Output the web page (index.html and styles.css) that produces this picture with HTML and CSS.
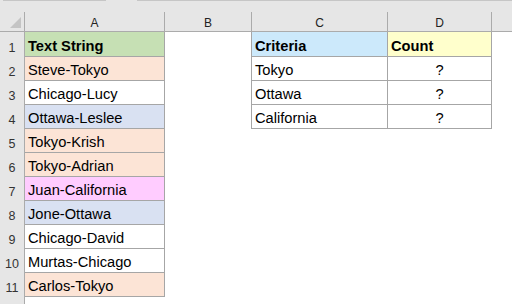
FILE: index.html
```html
<!DOCTYPE html>
<html lang="en">
<head>
<meta charset="utf-8">
<title>Count by criteria</title>
<link rel="stylesheet" href="styles.css">
</head>
<body>
<div class="topbar">
  <div class="box box-name"></div>
  <div class="box box-fx"></div>
  <div class="box box-formula"></div>
</div>
<div class="sheet">
  <!-- column headers -->
  <div class="hd corner"><span class="tri"></span></div>
  <div class="hd col">A</div>
  <div class="hd col">B</div>
  <div class="hd col">C</div>
  <div class="hd col">D</div>
  <div class="hd fill"></div>

  <!-- row 1 -->
  <div class="rn first">1</div>
  <div class="c a bold green first">Text String</div>
  <div class="c b edge first"></div>
  <div class="c t bold sky first">Criteria</div>
  <div class="c t bold lemon first">Count</div>
  <div class="c first"></div>

  <!-- row 2 -->
  <div class="rn">2</div>
  <div class="c a peach">Steve-Tokyo</div>
  <div class="c b edge"></div>
  <div class="c t">Tokyo</div>
  <div class="c t mid">?</div>
  <div class="c"></div>

  <!-- row 3 -->
  <div class="rn">3</div>
  <div class="c a">Chicago-Lucy</div>
  <div class="c b edge"></div>
  <div class="c t">Ottawa</div>
  <div class="c t mid">?</div>
  <div class="c"></div>

  <!-- row 4 -->
  <div class="rn">4</div>
  <div class="c a lilac">Ottawa-Leslee</div>
  <div class="c b edge"></div>
  <div class="c t">California</div>
  <div class="c t mid">?</div>
  <div class="c"></div>

  <div class="rn">5</div>
  <div class="c a peach">Tokyo-Krish</div>
  <div class="c span"></div>

  <div class="rn">6</div>
  <div class="c a peach">Tokyo-Adrian</div>
  <div class="c span"></div>

  <div class="rn">7</div>
  <div class="c a pink">Juan-California</div>
  <div class="c span"></div>

  <div class="rn">8</div>
  <div class="c a lilac">Jone-Ottawa</div>
  <div class="c span"></div>

  <div class="rn">9</div>
  <div class="c a">Chicago-David</div>
  <div class="c span"></div>

  <div class="rn">10</div>
  <div class="c a">Murtas-Chicago</div>
  <div class="c span"></div>

  <div class="rn">11</div>
  <div class="c a peach">Carlos-Tokyo</div>
  <div class="c span"></div>

  <div class="rn last"></div>
  <div class="c spanall"></div>
</div>
</body>
</html>
```

FILE: styles.css
```css
html, body {
  margin: 0;
  padding: 0;
  background: #ffffff;
}

body {
  width: 512px;
  height: 304px;
  overflow: hidden;
  font-family: "Liberation Sans", Arial, sans-serif;
  color: #000;
}

/* formula bar strip above the grid */
.topbar {
  position: relative;
  height: 12px;
  background: #e6e6e6;
  display: flex;
  align-items: flex-start;
}

.box {
  height: 1px;
  margin-top: -1px;
  background: #ffffff;
  border: 1px solid #c6c6c6;
  border-top: none;
}

.box-name { margin-left: 3px; width: 101px; }
.box-fx { margin-left: 31px; width: 112px; }
.box-formula { margin-left: 0; flex: 1; border-right: none; }

/* grid */
.sheet {
  display: grid;
  grid-template-columns: 25px 140px 87px 136px 104px 1fr;
  grid-template-rows: 20px 25px repeat(10, 24px) 1fr;
  height: 292px;
}

.hd {
  background: #e6e6e6;
  border-bottom: 1px solid #ababab;
  box-sizing: border-box;
  font-size: 12px;
  color: #222;
  display: flex;
  align-items: center;
  justify-content: center;
  padding-top: 2px;
}

.hd.col,
.hd.corner {
  border-right: 1px solid #ababab;
}

.corner {
  position: relative;
}

.tri {
  position: absolute;
  right: 3px;
  bottom: 3px;
  width: 0;
  height: 0;
  border-left: 11px solid transparent;
  border-bottom: 11px solid #c4c4c4;
}

.rn {
  background: #e6e6e6;
  border-right: 1px solid #ababab;
  box-sizing: border-box;
  font-size: 12.5px;
  color: #333;
  display: flex;
  align-items: flex-end;
  justify-content: center;
  padding-bottom: 3px;
  line-height: 1;
}

.c {
  box-sizing: border-box;
  font-size: 14.67px;
  line-height: 1;
  display: flex;
  align-items: flex-end;
  padding: 0 3px 2px 3px;
  white-space: nowrap;
}

.a,
.t {
  border-right: 1px solid #a6a6a6;
  border-bottom: 1px solid #a6a6a6;
}

.edge {
  border-right: 1px solid #a6a6a6;
}

.mid {
  justify-content: center;
}

.bold {
  font-weight: bold;
}

.span {
  grid-column: 3 / 7;
}

.spanall {
  grid-column: 2 / 7;
}

/* fills */
.green { background: #c6e0b4; }
.peach { background: #fce4d6; }
.lilac { background: #d9e1f2; }
.pink { background: #ffccff; }
.sky { background: #cce9fb; }
.lemon { background: #ffffcc; }
```
